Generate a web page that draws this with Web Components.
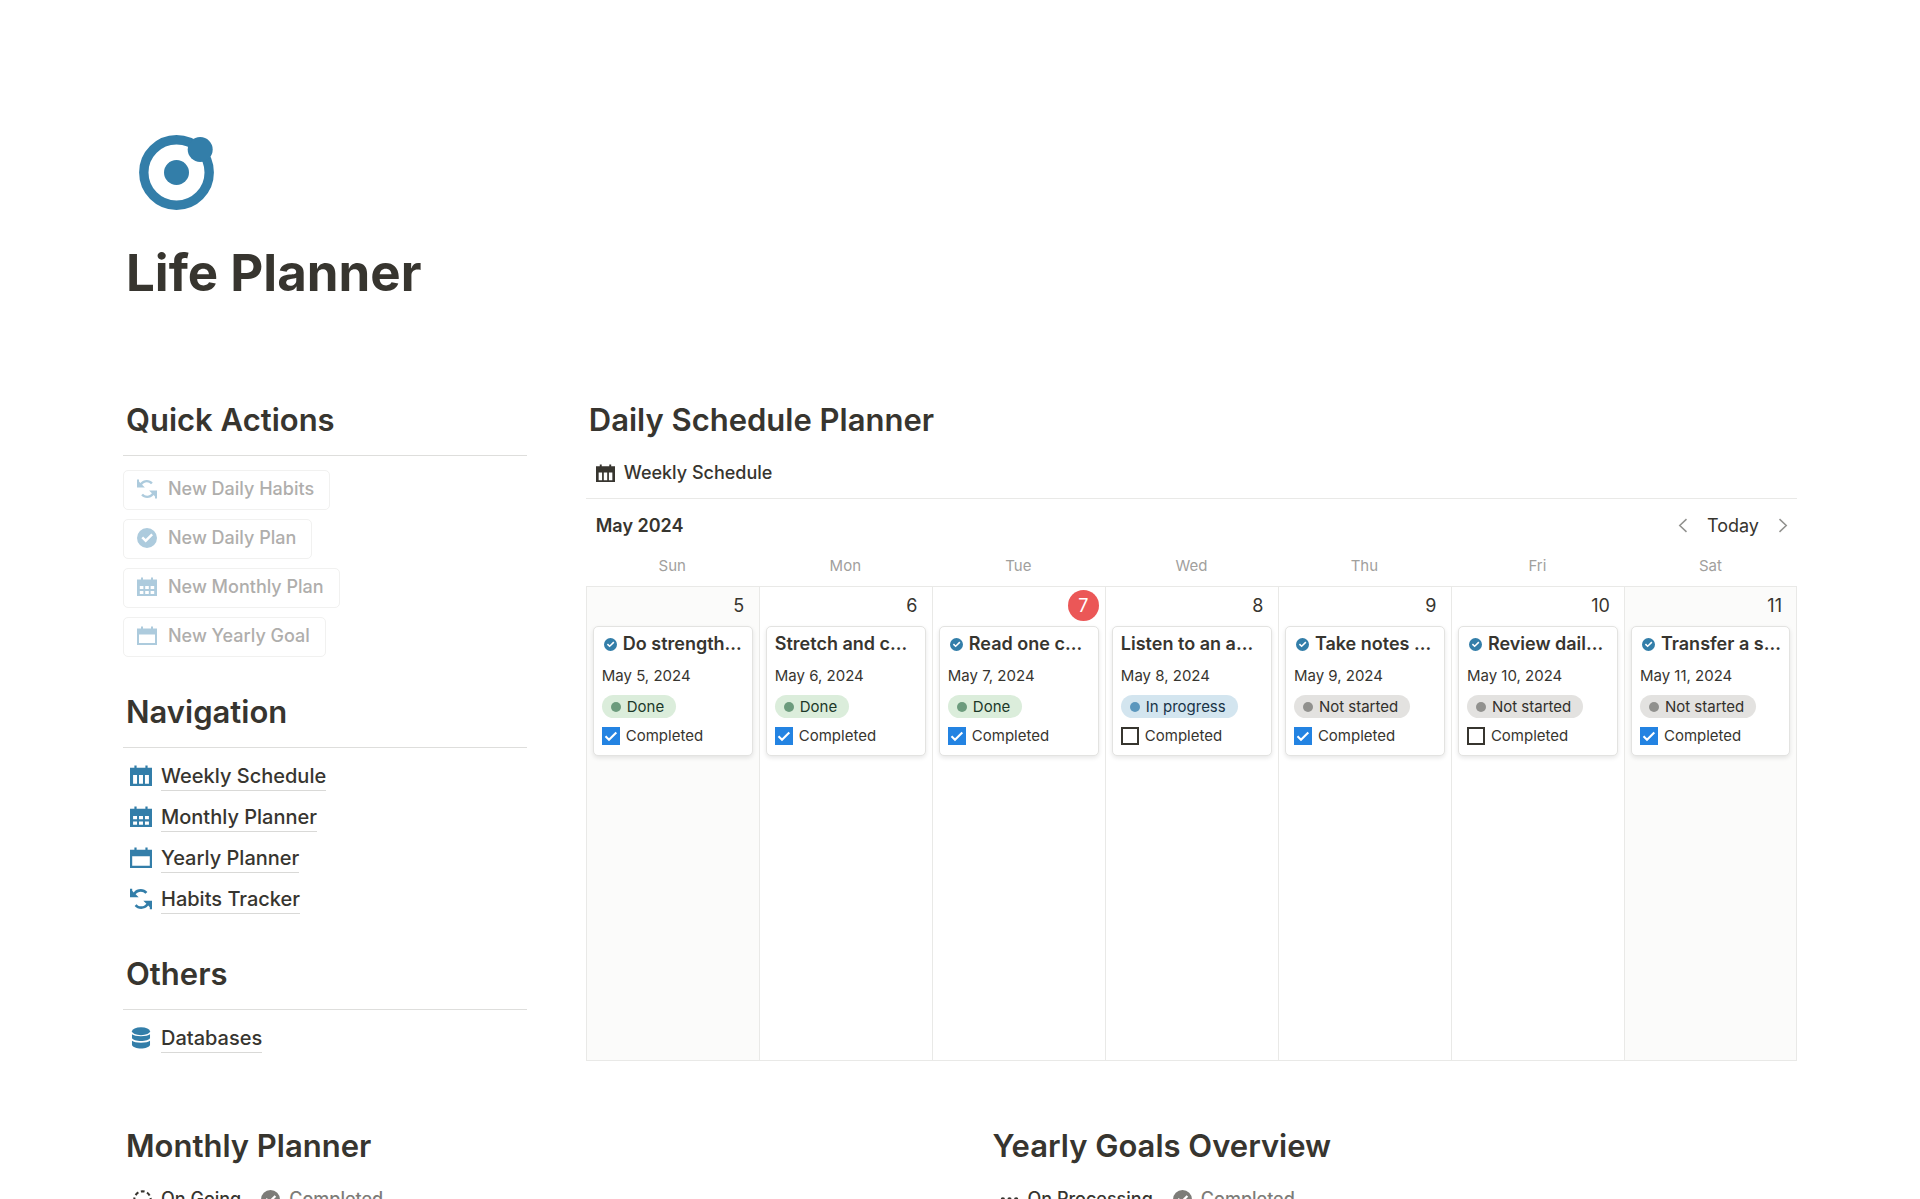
<!doctype html>
<html lang="en">
  <head>
    <meta charset="UTF-8">
    <meta name="viewport" content="width=device-width, initial-scale=1">
    <title>Life Planner</title>
    <style>
      body {
        margin: 0;
        font-family: Inter, "Liberation Sans", sans-serif;
        font-size: 18px;
        color: #37352f;
        background: #fff;
        --blue: #337ea9;
        --line: #e9e9e7;
      }
    </style>
  </head>
  <body>
    <planner-page heading="Life Planner">
      <planner-section slot="side" heading="Quick Actions" divider>
        <action-list>
          <action-button icon="sync">New Daily Habits</action-button>
          <action-button icon="check">New Daily Plan</action-button>
          <action-button icon="month">New Monthly Plan</action-button>
          <action-button icon="year">New Yearly Goal</action-button>
        </action-list>
      </planner-section>
      <planner-section slot="side" heading="Navigation" divider>
        <page-link icon="week" href="#weekly">Weekly Schedule</page-link>
        <page-link icon="month" href="#monthly">Monthly Planner</page-link>
        <page-link icon="year" href="#yearly">Yearly Planner</page-link>
        <page-link icon="sync" href="#habits">Habits Tracker</page-link>
      </planner-section>
      <planner-section slot="side" heading="Others" divider>
        <page-link icon="database" href="#databases">Databases</page-link>
      </planner-section>

      <planner-section slot="main" heading="Daily Schedule Planner">
        <view-tabs lined>
          <view-tab icon="week" selected>Weekly Schedule</view-tab>
        </view-tabs>
        <week-calendar month="May 2024" first="5" today="7">
          <plan-card slot="day-0" icon date="May 5, 2024" status="Done" completed>Do strength…</plan-card>
          <plan-card slot="day-1" date="May 6, 2024" status="Done" completed>Stretch and c…</plan-card>
          <plan-card slot="day-2" icon date="May 7, 2024" status="Done" completed>Read one c…</plan-card>
          <plan-card slot="day-3" date="May 8, 2024" status="In progress">Listen to an a…</plan-card>
          <plan-card slot="day-4" icon date="May 9, 2024" status="Not started" completed>Take notes …</plan-card>
          <plan-card slot="day-5" icon date="May 10, 2024" status="Not started">Review dail…</plan-card>
          <plan-card slot="day-6" icon date="May 11, 2024" status="Not started" completed>Transfer a s…</plan-card>
        </week-calendar>
      </planner-section>

      <planner-section slot="bottom" heading="Monthly Planner">
        <view-tabs>
          <view-tab icon="dashed" selected>On Going</view-tab>
          <view-tab icon="check">Completed</view-tab>
        </view-tabs>
      </planner-section>
      <planner-section slot="bottom" heading="Yearly Goals Overview">
        <view-tabs>
          <view-tab icon="dots" selected>On Processing</view-tab>
          <view-tab icon="check">Completed</view-tab>
        </view-tabs>
      </planner-section>
    </planner-page>

    <template id="planner-page-template">
      <style>
        :host {
          display: block;
          padding: 122px 123px 0;
        }
        .logo {
          display: block;
          width: 100px;
          height: 100px;
          margin-left: 3px;
          fill: var(--blue);
        }
        h1 {
          margin: 20px 3px 97px;
          font-size: 51px;
          line-height: 61px;
          font-weight: 700;
        }
        .top {
          display: grid;
          grid-template-columns: minmax(0, 1fr) minmax(0, 3fr);
          gap: 59px;
          align-items: start;
        }
        .side {
          display: flex;
          flex-direction: column;
          gap: 35px;
        }
        .bottom {
          display: grid;
          grid-template-columns: repeat(2, minmax(0, 1fr));
          gap: 59px;
          margin-top: 65px;
        }
      </style>
      <header>
        <svg class="logo" viewBox="0 0 100 100" aria-hidden="true">
          <circle cx="50.5" cy="50.5" r="32.7" fill="none" stroke="var(--blue)" stroke-width="9.4"/>
          <circle cx="50.5" cy="50.5" r="12.5"/>
          <circle cx="74.2" cy="27.5" r="12.5"/>
        </svg>
        <h1></h1>
      </header>
      <main>
        <div class="top">
          <div class="side"><slot name="side"></slot></div>
          <slot name="main"></slot>
        </div>
        <div class="bottom"><slot name="bottom"></slot></div>
      </main>
    </template>

    <template id="planner-section-template">
      <style>
        :host {
          display: block;
        }
        h2 {
          margin: 0 3px;
          font-size: 31px;
          line-height: 40px;
          font-weight: 600;
        }
        hr {
          display: none;
          margin: 15px 0 0;
          border: 0;
          border-top: 1px solid #dededc;
        }
        :host([divider]) hr {
          display: block;
        }
        :host([divider]) .body {
          padding-top: 7px;
        }
      </style>
      <h2></h2>
      <hr>
      <div class="body"><slot></slot></div>
    </template>

    <template id="action-button-template">
      <style>
        :host {
          display: block;
        }
        button {
          display: flex;
          align-items: center;
          gap: 11px;
          height: 40px;
          padding: 0 15px 2px 13px;
          border: 1px solid #f1f1f0;
          border-radius: 5px;
          background: none;
          color: #afaeac;
          font: 500 18px/22px Inter, "Liberation Sans", sans-serif;
          cursor: pointer;
        }
        ui-icon {
          width: 20px;
          height: 20px;
          color: #adcbdd;
        }
      </style>
      <button type="button"><ui-icon></ui-icon><span><slot></slot></span></button>
    </template>

    <template id="page-link-template">
      <style>
        :host {
          display: block;
        }
        a {
          display: flex;
          align-items: center;
          gap: 9px;
          height: 41px;
          padding-left: 7px;
          color: inherit;
          text-decoration: none;
          font-size: 20px;
          line-height: 27px;
          font-weight: 500;
        }
        ui-icon {
          width: 22px;
          height: 22px;
          color: var(--blue);
        }
        span {
          padding-top: 2px;
          border-bottom: 1px solid #d9d9d7;
        }
      </style>
      <a><ui-icon></ui-icon><span><slot></slot></span></a>
    </template>

    <template id="view-tab-template">
      <style>
        :host {
          display: block;
        }
        button {
          display: flex;
          align-items: center;
          gap: 9px;
          height: 44px;
          padding: 0 10px;
          border: 0;
          background: none;
          color: #7d7c78;
          font: 500 18px/22px Inter, "Liberation Sans", sans-serif;
          cursor: pointer;
        }
        :host([selected]) button {
          color: #37352f;
        }
        ui-icon {
          width: 19px;
          height: 19px;
        }
      </style>
      <button type="button"><ui-icon></ui-icon><span><slot></slot></span></button>
    </template>

    <template id="week-calendar-template">
      <style>
        :host {
          display: block;
        }
        .bar {
          display: flex;
          align-items: center;
          justify-content: space-between;
          height: 53px;
          padding: 0 7px 0 10px;
        }
        .month {
          font-weight: 600;
        }
        nav {
          display: flex;
          align-items: center;
          gap: 7px;
        }
        button {
          display: flex;
          align-items: center;
          justify-content: center;
          height: 31px;
          min-width: 15px;
          padding: 0;
          border: 0;
          background: none;
          color: #91918e;
          font: 400 18px/22px Inter, "Liberation Sans", sans-serif;
          cursor: pointer;
        }
        .today {
          padding: 0 9px;
          color: inherit;
        }
        ui-icon {
          width: 15px;
          height: 15px;
        }
        table {
          width: 100%;
          table-layout: fixed;
          border-collapse: separate;
          border-spacing: 0;
        }
        th {
          padding: 0 0 7px;
          font-size: 15px;
          line-height: 27px;
          font-weight: 400;
          color: #a1a09d;
        }
        td {
          height: 475px;
          padding: 0 6px;
          border: solid var(--line);
          border-width: 1px 0 1px 1px;
          vertical-align: top;
          box-sizing: border-box;
        }
        td:last-child {
          border-right-width: 1px;
        }
        td:first-child, td:last-child {
          background: #fbfbfa;
        }
        .num {
          display: flex;
          align-items: center;
          justify-content: center;
          width: max-content;
          min-width: 12px;
          height: 31px;
          margin: 3px 8px 5px auto;
        }
        .num.now {
          width: 31px;
          margin-right: 0;
          border-radius: 50%;
          background: #eb5757;
          color: #fff;
        }
      </style>
      <div class="bar">
        <span class="month"></span>
        <nav>
          <button type="button" aria-label="Previous week"><ui-icon name="prev"></ui-icon></button>
          <button type="button" class="today">Today</button>
          <button type="button" aria-label="Next week"><ui-icon name="next"></ui-icon></button>
        </nav>
      </div>
      <table>
        <thead><tr></tr></thead>
        <tbody><tr></tr></tbody>
      </table>
    </template>

    <template id="plan-card-template">
      <style>
        :host {
          display: block;
        }
        article {
          padding: 5px 8px 8px;
          border: 1px solid #e3e3e1;
          border-radius: 5px;
          background: #fff;
          box-shadow: 0 2px 4px rgba(15, 15, 15, .1);
          font-size: 15px;
        }
        h3 {
          display: flex;
          align-items: center;
          gap: 6px;
          margin: 0;
          font-size: 18px;
          line-height: 24px;
          font-weight: 600;
          white-space: nowrap;
        }
        ui-icon {
          width: 13px;
          height: 13px;
          margin-left: 2px;
          color: var(--blue);
        }
        .date {
          margin-top: 8px;
          line-height: 23px;
        }
        .status {
          display: flex;
          align-items: center;
          gap: 6px;
          width: max-content;
          height: 23px;
          margin: 8px 0 6px;
          padding: 0 12px 0 9px;
          border-radius: 12px;
          background: #e3e2e0;
          color: #32302c;
        }
        .status::before {
          content: "";
          width: 10px;
          height: 10px;
          border-radius: 50%;
          background: #91918e;
        }
        :host([status="Done"]) .status {
          background: #dbeddb;
          color: #1c3829;
        }
        :host([status="Done"]) .status::before {
          background: #6c9b7d;
        }
        :host([status="In progress"]) .status {
          background: #d3e5ef;
          color: #183347;
        }
        :host([status="In progress"]) .status::before {
          background: #5b97bd;
        }
        label {
          display: flex;
          align-items: center;
          gap: 6px;
          height: 23px;
        }
        input {
          appearance: none;
          width: 18px;
          height: 18px;
          margin: 0;
          border: 2px solid #37352f;
          box-sizing: border-box;
        }
        input:checked {
          border: 0;
          background: #2383e2 url('data:image/svg+xml,<svg xmlns="http://www.w3.org/2000/svg" viewBox="0 0 18 18"><path d="M3.5 9.2L7 12.7L14.3 5.4" fill="none" stroke="white" stroke-width="2.1"/></svg>');
        }
      </style>
      <article>
        <h3><span><slot></slot></span></h3>
        <div class="date"></div>
        <div class="status"></div>
        <label><input type="checkbox"><span>Completed</span></label>
      </article>
    </template>

    <script>
      const frame = "M0 2.4H4V0.4H6V2.4H14V0.4H16V2.4H20V19H0Z"
      const icons = {
        week: `<path fill-rule="evenodd" d="${frame}M2.8 9V17H6.4V9ZM8.2 9V17H11.8V9ZM13.6 9V17H17.2V9Z"/>`,
        month: `<path fill-rule="evenodd" d="${frame}M2.8 9V12H6.4V9ZM8.2 9V12H11.8V9ZM13.6 9V12H17.2V9ZM2.8 14V17H6.4V14ZM8.2 14V17H11.8V14ZM13.6 14V17H17.2V14Z"/>`,
        year: `<path fill-rule="evenodd" d="${frame}M2 8.4V17H18V8.4Z"/>`,
        check: `<path fill-rule="evenodd" d="M10 0a10 10 0 1 0 0 20a10 10 0 1 0 0-20ZM14.3 5.5L16 7.2L8.7 14.4L4.4 10.2L6.1 8.4L8.7 11Z"/>`,
        sync: `<path d="M0 .6H2V2.6L3.4 4C5 2 7.2 1 9.8 1C12.2 1 14.3 2 15.8 3.7L14 5.3C12.9 4 11.5 3.3 9.8 3.3C7.9 3.3 6.2 4.2 5.1 5.7L7.9 8.4H0ZM20 19.4H18V17.4L16.6 16C15 18 12.8 19 10.2 19C7.8 19 5.7 18 4.2 16.3L6 14.7C7.1 16 8.5 16.7 10.2 16.7C12.1 16.7 13.8 15.8 14.9 14.3L12.1 11.6H20Z"/>`,
        database: `<ellipse cx="10" cy="3.8" rx="8.2" ry="3.6"/><path d="M1.8 6.5C4 8.9 16 8.9 18.2 6.5V10C17 13.6 3 13.6 1.8 10ZM1.8 12.6C4 15 16 15 18.2 12.6V16.4C17 20.6 3 20.6 1.8 16.4Z"/>`,
        dashed: `<circle cx="10" cy="10" r="8.6" fill="none" stroke="currentColor" stroke-width="2.2" stroke-dasharray="4 2.75" stroke-dashoffset="2"/>`,
        dots: `<circle cx="3" cy="10" r="2.3"/><circle cx="10" cy="10" r="2.3"/><circle cx="17" cy="10" r="2.3"/>`,
        prev: `<path d="M14 1.5L5 10L14 18.5" fill="none" stroke="currentColor" stroke-width="2"/>`,
        next: `<path d="M6 1.5L15 10L6 18.5" fill="none" stroke="currentColor" stroke-width="2"/>`
      }

      class UiIcon extends HTMLElement {
        static observedAttributes = ["name"]

        constructor() {
          super()
          this.attachShadow({mode: "open"})
        }

        attributeChangedCallback() {
          this.shadowRoot.innerHTML = `
            <style>
              :host { display: block; flex: none; }
              svg { display: block; width: 100%; height: 100%; fill: currentColor; }
            </style>
            <svg viewBox="0 0 20 20" aria-hidden="true">${icons[this.getAttribute("name")] || ""}</svg>`
        }
      }
      customElements.define("ui-icon", UiIcon)

      class TemplateElement extends HTMLElement {
        constructor() {
          super()
          const template = document.getElementById(`${this.localName}-template`)
          this.attachShadow({mode: "open"}).append(document.importNode(template.content, true))
          this.fill(this.shadowRoot)
        }

        fill(root) {}
      }

      customElements.define("planner-page", class extends TemplateElement {
        fill(root) {
          root.querySelector("h1").textContent = this.getAttribute("heading")
        }
      })

      customElements.define("planner-section", class extends TemplateElement {
        fill(root) {
          root.querySelector("h2").textContent = this.getAttribute("heading")
        }
      })

      class IconElement extends TemplateElement {
        fill(root) {
          root.querySelector("ui-icon").setAttribute("name", this.getAttribute("icon"))
        }
      }
      customElements.define("action-button", class extends IconElement {})
      customElements.define("view-tab", class extends IconElement {})
      customElements.define("page-link", class extends IconElement {
        fill(root) {
          super.fill(root)
          root.querySelector("a").href = this.getAttribute("href")
        }
      })

      customElements.define("action-list", class extends HTMLElement {
        constructor() {
          super()
          this.attachShadow({mode: "open"}).innerHTML = `
            <style>
              :host { display: flex; flex-direction: column; align-items: flex-start; gap: 9px; padding-top: 7px; }
            </style>
            <slot></slot>`
        }
      })

      customElements.define("view-tabs", class extends HTMLElement {
        constructor() {
          super()
          this.attachShadow({mode: "open"}).innerHTML = `
            <style>
              :host { display: flex; align-items: flex-start; height: 47px; margin-top: 11px; }
              :host([lined]) { border-bottom: 1px solid var(--line); }
            </style>
            <slot></slot>`
        }
      })

      customElements.define("week-calendar", class extends TemplateElement {
        fill(root) {
          const first = Number(this.getAttribute("first"))
          const today = Number(this.getAttribute("today"))
          const days = ["Sun", "Mon", "Tue", "Wed", "Thu", "Fri", "Sat"]
          root.querySelector(".month").textContent = this.getAttribute("month")
          root.querySelector("thead tr").innerHTML = days.map(day => `<th scope="col">${day}</th>`).join("")
          root.querySelector("tbody tr").innerHTML = days.map((day, i) => `
            <td>
              <div class="num${first + i === today ? " now" : ""}">${first + i}</div>
              <slot name="day-${i}"></slot>
            </td>`).join("")
        }
      })

      customElements.define("plan-card", class extends TemplateElement {
        fill(root) {
          if (this.hasAttribute("icon")) {
            const icon = document.createElement("ui-icon")
            icon.setAttribute("name", "check")
            root.querySelector("h3").prepend(icon)
          }
          root.querySelector(".date").textContent = this.getAttribute("date")
          root.querySelector(".status").textContent = this.getAttribute("status")
          root.querySelector("input").checked = this.hasAttribute("completed")
        }
      })
    </script>
  </body>
</html>
